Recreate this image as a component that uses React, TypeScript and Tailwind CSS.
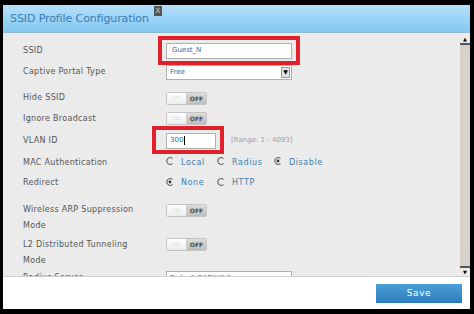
import React from 'react';

const font = { fontFamily: '"DejaVu Sans", Verdana, sans-serif' };

const Toggle: React.FC = () => (
    <div className="flex h-[13px] w-[41px] overflow-hidden rounded-[2px] border border-[#c4c4c4] bg-[#f4f4f4]">
        <div className="flex w-[20px] items-center justify-center border-r border-[#d0d0d0] bg-gradient-to-b from-white to-[#ececec] text-[5px] text-[#e0e0e0]">
            ON
        </div>
        <div className="flex flex-1 items-center justify-center bg-gradient-to-b from-[#dcdcdc] to-[#bdbdbd] text-[6px] font-bold text-[#4a4a4a]">
            OFF
        </div>
    </div>
);

const Radio: React.FC<{ label: string; checked?: boolean; width: string }> = ({ label, checked, width }) => (
    <div className={`flex items-center gap-[7px] ${width}`}>
        <svg width="8" height="8" viewBox="0 0 8 8" className="-mt-[3px]">
            <path d="M6.5 1.6 A3.3 3.3 0 1 0 6.5 6.4" fill="none" stroke="#666" strokeWidth="1.1" />
            {checked && <circle cx="4" cy="4" r="1.4" fill="#333" />}
        </svg>
        <span className="text-[8px] tracking-[0.6px] text-[#4280b0]">{label}</span>
    </div>
);

const Row: React.FC<{ label: React.ReactNode; h: string; children?: React.ReactNode; className?: string }> = ({
    label,
    h,
    children,
    className = '',
}) => (
    <div className={`flex items-center ${h} ${className}`}>
        <div className="w-[163px] shrink-0 pl-[20px] text-[8px] tracking-[0.3px] text-[#555]">{label}</div>
        <div className="flex items-center">{children}</div>
    </div>
);

const App: React.FC = () => {
    return (
        <div className="h-[314px] w-[474px] bg-black pb-[5px] pl-[3px] pr-[4px] pt-[5px]" style={font}>
            <div className="flex h-[304px] w-[467px] flex-col bg-white">
                {/* header */}
                <div className="flex h-[28px] shrink-0 items-start border-b border-[#8fb8d4] bg-gradient-to-b from-[#b5e0fb] to-[#82c8f2] pl-[7px] pt-[6px]">
                    <span className="text-[11px] tracking-[-0.1px] text-[#3c7cae]">SSID Profile Configuration</span>
                    <span className="ml-[5px] mt-[-5px] flex h-[10px] w-[8px] items-center justify-center bg-[#555] text-[7px] leading-none text-[#cfcfcf]">
                        X
                    </span>
                </div>

                {/* content */}
                <div className="flex h-[243px] shrink-0 bg-[#ebebeb]">
                    <div className="flex-1 overflow-hidden pt-[7px]">
                        <Row label="SSID" h="h-[21px]">
                            <div className="relative">
                                <div className="flex h-[16px] w-[126px] items-center border border-[#b0b0b0] bg-white pl-[5px] text-[7px] text-[#2f6f9f]">
                                    Guest_N
                                </div>
                                <div className="absolute -bottom-[6px] -left-[8px] -right-[8px] -top-[7px] border-[4px] border-[#e0202a]" />
                            </div>
                        </Row>
                        <Row label="Captive Portal Type" h="h-[22px]">
                            <div className="flex h-[15px] w-[126px] items-center justify-between border border-[#b0b0b0] bg-white pl-[3px] pr-[1px] text-[7px] text-[#2f6f9f]">
                                <span>Free</span>
                                <span className="flex h-[11px] w-[9px] items-center justify-center border border-[#999] bg-[#e4e4e4] text-[6px] leading-none text-black">
                                    ▼
                                </span>
                            </div>
                        </Row>
                        <Row label="Hide SSID" h="h-[20px]" className="mt-[5px]">
                            <Toggle />
                        </Row>
                        <Row label="Ignore Broadcast" h="h-[21px]">
                            <Toggle />
                        </Row>
                        <Row label="VLAN ID" h="h-[23px]">
                            <div className="relative">
                                <div className="flex h-[16px] w-[50px] items-center border border-[#b0b0b0] bg-white pl-[3px] text-[7px] text-[#2f6f9f]">
                                    300<span className="ml-[1px] h-[9px] w-px bg-black" />
                                </div>
                                <div className="absolute -bottom-[5px] -left-[14px] -right-[8px] -top-[7px] border-[4px] border-[#e0202a]" />
                            </div>
                            <span className="ml-[15px] text-[7px] text-[#a0a0a0]">[Range: 1 - 4093]</span>
                        </Row>
                        <Row label="MAC Authentication" h="h-[21px]">
                            <Radio label="Local" width="w-[51px]" />
                            <Radio label="Radius" width="w-[57px]" />
                            <Radio label="Disable" checked width="w-[60px]" />
                        </Row>
                        <Row label="Redirect" h="h-[20px]">
                            <Radio label="None" checked width="w-[51px]" />
                            <Radio label="HTTP" width="w-[50px]" />
                        </Row>
                        <div className="mt-[9px] flex">
                            <div className="w-[163px] shrink-0 pl-[20px] text-[8px] leading-[16px] tracking-[0.3px] text-[#555]">
                                Wireless ARP Suppression
                                <br />
                                Mode
                            </div>
                            <div className="pt-[2px]">
                                <Toggle />
                            </div>
                        </div>
                        <div className="mt-[3px] flex">
                            <div className="w-[163px] shrink-0 pl-[20px] text-[8px] leading-[16px] tracking-[0.3px] text-[#555]">
                                L2 Distributed Tunneling
                                <br />
                                Mode
                            </div>
                            <div className="pt-[1px]">
                                <Toggle />
                            </div>
                        </div>
                        <Row label="Radius Server" h="h-[22px]" className="-mt-[2px]">
                            <div className="flex h-[15px] w-[126px] items-center border border-[#b0b0b0] bg-white pl-[3px] text-[7px] text-[#2f6f9f]">
                                Default RADIUS Server
                            </div>
                        </Row>
                    </div>

                    {/* scrollbar */}
                    <div className="flex w-[10px] shrink-0 flex-col bg-[#ececec] pt-[2px]">
                        <div className="flex h-[8px] items-center justify-center text-[5px] leading-none text-black">▲</div>
                        <div className="flex-1 border-y-2 border-[#555] bg-[#d6d2ca]" />
                        <div className="flex h-[8px] items-center justify-center text-[5px] leading-none text-black">▼</div>
                    </div>
                </div>

                {/* footer */}
                <div className="flex flex-1 items-start justify-end border-t border-[#cfcfcf] bg-white pr-[8px] pt-[7px]">
                    <button className="flex h-[19px] w-[86px] items-center justify-center bg-gradient-to-b from-[#4d9fd8] to-[#2a7dbd] text-[9px] tracking-[0.6px] text-white">
                        Save
                    </button>
                </div>
            </div>
        </div>
    );
};

export default App;
